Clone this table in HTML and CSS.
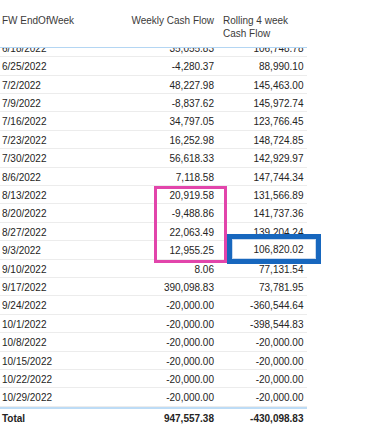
FILE: index.html
```html
<!DOCTYPE html>
<html>
<head>
<meta charset="utf-8">
<link rel="stylesheet" href="styles.css">
</head>
<body>
<div class="table">
  <div class="head">
    <div class="hc c1">FW EndOfWeek</div>
    <div class="hc c2">Weekly Cash Flow</div>
    <div class="hc c3h">Rolling 4 week Cash Flow</div>
  </div>
  <div class="body">
    <div class="rows">
      <div class="row"><span class="c1">6/18/2022</span><span class="c2">35,055.83</span><span class="c3">106,748.78</span></div>
      <div class="row"><span class="c1">6/25/2022</span><span class="c2">-4,280.37</span><span class="c3">88,990.10</span></div>
      <div class="row"><span class="c1">7/2/2022</span><span class="c2">48,227.98</span><span class="c3">145,463.00</span></div>
      <div class="row"><span class="c1">7/9/2022</span><span class="c2">-8,837.62</span><span class="c3">145,972.74</span></div>
      <div class="row"><span class="c1">7/16/2022</span><span class="c2">34,797.05</span><span class="c3">123,766.45</span></div>
      <div class="row"><span class="c1">7/23/2022</span><span class="c2">16,252.98</span><span class="c3">148,724.85</span></div>
      <div class="row"><span class="c1">7/30/2022</span><span class="c2">56,618.33</span><span class="c3">142,929.97</span></div>
      <div class="row"><span class="c1">8/6/2022</span><span class="c2">7,118.58</span><span class="c3">147,744.34</span></div>
      <div class="row"><span class="c1">8/13/2022</span><span class="c2">20,919.58</span><span class="c3">131,566.89</span></div>
      <div class="row"><span class="c1">8/20/2022</span><span class="c2">-9,488.86</span><span class="c3">141,737.36</span></div>
      <div class="row"><span class="c1">8/27/2022</span><span class="c2">22,063.49</span><span class="c3">139,204.24</span></div>
      <div class="row"><span class="c1">9/3/2022</span><span class="c2">12,955.25</span><span class="c3">106,820.02</span></div>
      <div class="row"><span class="c1">9/10/2022</span><span class="c2">8.06</span><span class="c3">77,131.54</span></div>
      <div class="row"><span class="c1">9/17/2022</span><span class="c2">390,098.83</span><span class="c3">73,781.95</span></div>
      <div class="row"><span class="c1">9/24/2022</span><span class="c2">-20,000.00</span><span class="c3">-360,544.64</span></div>
      <div class="row"><span class="c1">10/1/2022</span><span class="c2">-20,000.00</span><span class="c3">-398,544.83</span></div>
      <div class="row"><span class="c1">10/8/2022</span><span class="c2">-20,000.00</span><span class="c3">-20,000.00</span></div>
      <div class="row"><span class="c1">10/15/2022</span><span class="c2">-20,000.00</span><span class="c3">-20,000.00</span></div>
      <div class="row"><span class="c1">10/22/2022</span><span class="c2">-20,000.00</span><span class="c3">-20,000.00</span></div>
      <div class="row"><span class="c1">10/29/2022</span><span class="c2">-20,000.00</span><span class="c3">-20,000.00</span></div>
    </div>
  </div>
  <div class="total"><span class="c1">Total</span><span class="c2">947,557.38</span><span class="c3">-430,098.83</span></div>
</div>
<div class="mark-pink"></div>
<div class="mark-blue"><span>106,820.02</span></div>
</body>
</html>
```
FILE: styles.css
```css
html, body {
  margin: 0;
  padding: 0;
  background: #ffffff;
}
body {
  font-family: "Liberation Sans", Arial, sans-serif;
  font-size: 10px;
  color: #252423;
  width: 391px;
  height: 440px;
  overflow: hidden;
}
.table {
  width: 307px;
}
.head, .row, .total {
  display: grid;
  grid-template-columns: 130px 92px 85px;
}
.head {
  height: 48px;
  box-sizing: border-box;
  padding-top: 14px;
  border-bottom: 1px solid #b4d6f3;
  line-height: 13px;
  color: #3b3a39;
}
.hc.c1 { padding-left: 2px; }
.hc.c2 { text-align: right; padding-right: 8px; white-space: nowrap; }
.c3h { padding-left: 1px; padding-right: 12px; }
.body {
  height: 359px;
  overflow: hidden;
}
.rows {
  margin-top: -9.1px;
}
.row {
  height: 18.4px;
  box-sizing: border-box;
  border-bottom: 1px solid #ececec;
  line-height: 18px;
  padding-top: 1px;
}
.c1 { padding-left: 2px; }
.c2 { text-align: right; padding-right: 8px; }
.c3 { text-align: right; padding-right: 3.5px; }
.total {
  border-top: 2px solid #bddcf6;
  height: 20px;
  line-height: 20px;
  font-weight: bold;
}
.mark-pink {
  position: absolute;
  left: 154px;
  top: 186px;
  width: 73px;
  height: 77px;
  box-sizing: border-box;
  border: 3.5px solid #e245ab;
}
.mark-blue {
  position: absolute;
  left: 227px;
  top: 234px;
  width: 94px;
  height: 30px;
  box-sizing: border-box;
  border: 5px solid #1767be;
  background: #ffffff;
  box-shadow: inset 0 0 0 1px #c8d9ee;
  text-align: right;
  padding-right: 12.5px;
  line-height: 20px;
  padding-top: 1px;
}
```
